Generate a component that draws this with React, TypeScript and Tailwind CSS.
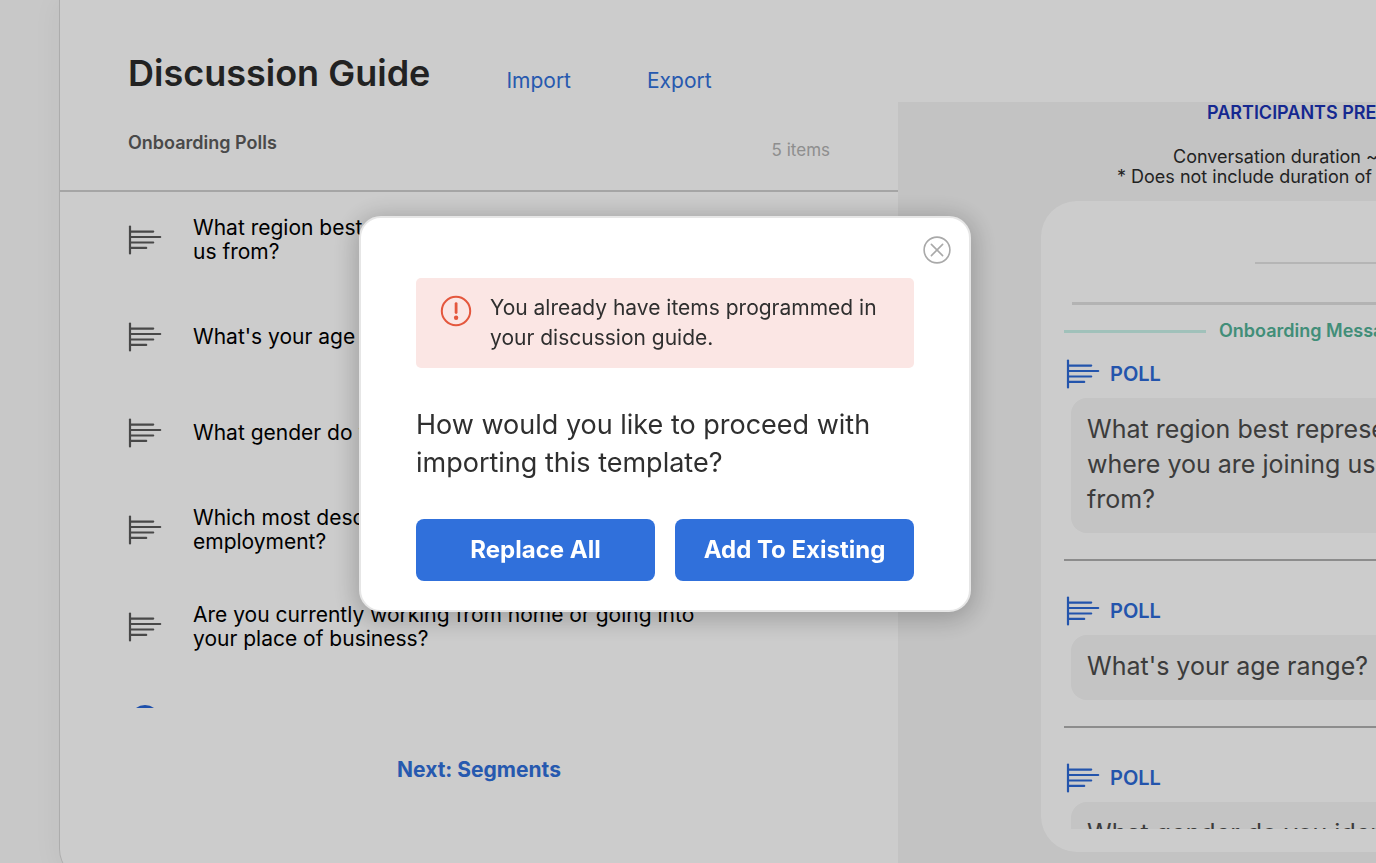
import { CirclePlus } from "lucide-react";

const POLLS = [
  "What region best represents where you are joining us from?",
  "What's your age range?",
  "What gender do you identify with?",
  "Which most describes your current state of employment?",
  "Are you currently working from home or going into your place of business?",
];

const PREVIEW = [
  ["What region best represents", "where you are joining us", "from?"],
  ["What's your age range?"],
  ["What gender do you identify"],
];

function PollIcon({ className }: { className?: string }) {
  return (
    <svg
      viewBox="0 0 34 30"
      className={className}
      fill="none"
      stroke="currentColor"
      strokeWidth="2.2"
      strokeLinecap="round"
      aria-hidden="true"
    >
      <path d="M2 1.5v27" />
      <path d="M2 6.6h23.2M2 12h30.2M2 17.5h23.2M2 22.9h16.2" />
    </svg>
  );
}

function AlertIcon() {
  return (
    <svg viewBox="0 0 32 32" className="size-8 shrink-0 text-[#e4573d]" aria-hidden="true">
      <circle cx="16" cy="16" r="14.2" fill="none" stroke="currentColor" strokeWidth="2" />
      <rect x="14.7" y="7.2" width="2.8" height="11.8" rx="1.4" fill="currentColor" />
      <circle cx="16.1" cy="22.7" r="2.2" fill="currentColor" />
    </svg>
  );
}

function CloseIcon() {
  return (
    <svg
      viewBox="0 0 28 28"
      className="size-7"
      fill="none"
      stroke="currentColor"
      strokeWidth="1.6"
      strokeLinecap="round"
      aria-hidden="true"
    >
      <circle cx="14" cy="14" r="12.9" />
      <path d="M8.4 8.4l11.2 11.2M19.6 8.4L8.4 19.6" />
    </svg>
  );
}

function Guide() {
  return (
    <section className="w-[838px] shrink-0">
      <header className="border-b-2 border-[#cfcfcf] px-[68px] pt-[51px] pb-[30px]">
        <div className="flex items-end gap-[76px]">
          <h1 className="text-[36px] leading-[44px] font-semibold text-[#2b2b2b]">
            Discussion Guide
          </h1>
          <a href="#import" className="text-[21px] leading-7 text-[#3070db]">
            Import
          </a>
          <a href="#export" className="text-[21px] leading-7 text-[#3070db]">
            Export
          </a>
        </div>
        <div className="mt-[31px] flex items-end justify-between">
          <h2 className="text-[18px] leading-[34px] font-semibold text-[#5c5c5c]">
            Onboarding Polls
          </h2>
          <span className="text-[17px] leading-5 text-[#b2b2b2]">5 items</span>
        </div>
      </header>

      <div className="h-[516px] overflow-hidden px-[68px]">
        <ul className="grid h-[483px] grid-rows-5">
          {POLLS.map((poll) => (
            <li key={poll} className="flex items-center gap-[31px]">
              <PollIcon className="h-[30px] w-[34px] shrink-0 text-[#5a5a5a]" />
              <p className="max-w-[520px] text-[21px] leading-6 text-black">{poll}</p>
            </li>
          ))}
        </ul>
        <button
          type="button"
          aria-label="Add item"
          className="mt-[30px] ml-[2px] block rounded-full bg-[#2563d6]"
        >
          <CirclePlus className="size-[30px] text-[#2563d6]" />
        </button>
      </div>

      <div className="pt-[46px] text-center">
        <a href="#segments" className="text-[21px] leading-8 font-bold text-[#3070db]">
          Next: Segments
        </a>
      </div>
    </section>
  );
}

function Preview() {
  return (
    <aside className="mt-[102px] flex-1 overflow-hidden bg-[#f4f4f4] pl-[143px] whitespace-nowrap">
      <h2 className="pl-[166px] text-[18px] leading-[22px] font-semibold text-[#1b32b4]">
        PARTICIPANTS PREVIEW
      </h2>
      <p className="mt-[23px] pl-[132px] text-[18px] leading-5 text-[#2b2b2b]">
        Conversation duration ~
      </p>
      <p className="pl-[76px] text-[18px] leading-5 text-[#2b2b2b]">
        * Does not include duration of
      </p>

      <div className="mt-[14px] h-[651px] rounded-l-[36px] bg-white pt-[61px] pl-[23px]">
        <div className="ml-[191px] h-[2px] bg-[#e3e3e3]" />
        <div className="mt-[38px] ml-2 h-[3px] bg-[#e0e0e0]" />
        <div className="h-[524px] overflow-hidden">
          <div className="mt-[14px] flex items-center gap-[13px]">
            <div className="h-[3px] w-[142px] shrink-0 bg-[#c8f2e9]" />
            <h3 className="text-[18px] leading-6 font-semibold text-[#52b297]">
              Onboarding Messages
            </h3>
          </div>
          {PREVIEW.map((lines, i) => (
            <article
              key={lines[0]}
              className={
                i === 0
                  ? "border-b-2 border-[#b0b0b0] pt-[15px] pb-[26px]"
                  : "border-b-2 border-[#b0b0b0] pt-[34px] pb-[26px]"
              }
            >
              <div className="flex h-8 items-center gap-[10px] pl-[2px] text-[#2c6ad8]">
                <PollIcon className="h-[30px] w-[34px]" />
                <h4 className="text-[20px] leading-6 font-semibold">POLL</h4>
              </div>
              <p className="mt-2 ml-[7px] rounded-l-2xl bg-[#f5f5f5] px-4 pt-[14px] pb-4 text-[25px] leading-[35px] text-[#4b4b4b]">
                {lines.map((line) => (
                  <span key={line} className="block">
                    {line}
                  </span>
                ))}
              </p>
            </article>
          ))}
        </div>
      </div>
    </aside>
  );
}

function ImportDialog() {
  return (
    <div className="fixed inset-0 flex items-center justify-center bg-black/20 pr-[46px] pb-[35px]">
      <div
        role="dialog"
        aria-modal="true"
        aria-labelledby="import-question"
        className="relative w-full max-w-[612px] rounded-[22px] border-2 border-[#e6e6e6] bg-white px-[55px] pt-[60px] pb-[29px] shadow-[0_4px_24px_4px_rgba(0,0,0,0.22)]"
      >
        <button
          type="button"
          aria-label="Close"
          className="absolute top-[18px] right-[18px] text-[#a9a9a9]"
        >
          <CloseIcon />
        </button>

        <div
          role="alert"
          className="flex items-start gap-[18px] rounded-[5px] bg-[#fbe6e4] py-[15px] pr-6 pl-6"
        >
          <span className="pt-[2px]">
            <AlertIcon />
          </span>
          <p className="text-[21px] leading-[30px] text-[#2f2f2f]">
            You already have items programmed in your discussion guide.
          </p>
        </div>

        <p id="import-question" className="mt-[38px] text-[27px] leading-[38px] text-[#2f2f2f]">
          How would you like to proceed with importing this template?
        </p>

        <div className="mt-[37px] grid grid-cols-2 gap-5">
          <button
            type="button"
            className="h-[62px] rounded-lg bg-[#3070db] text-[24px] leading-8 font-bold text-white"
          >
            Replace All
          </button>
          <button
            type="button"
            className="h-[62px] rounded-lg bg-[#3070db] text-[24px] leading-8 font-bold text-white"
          >
            Add To Existing
          </button>
        </div>
      </div>
    </div>
  );
}

export default function App() {
  return (
    <div className="flex h-screen overflow-hidden bg-[#fafafa] pl-[59px] font-['Inter',sans-serif]">
      <main className="-mb-4 flex min-w-0 flex-1 overflow-hidden rounded-bl-[30px] border-l border-[#d8d8d8] bg-white shadow-[0_0_30px_rgba(0,0,0,0.05)]">
        <Guide />
        <Preview />
      </main>
      <ImportDialog />
    </div>
  );
}
